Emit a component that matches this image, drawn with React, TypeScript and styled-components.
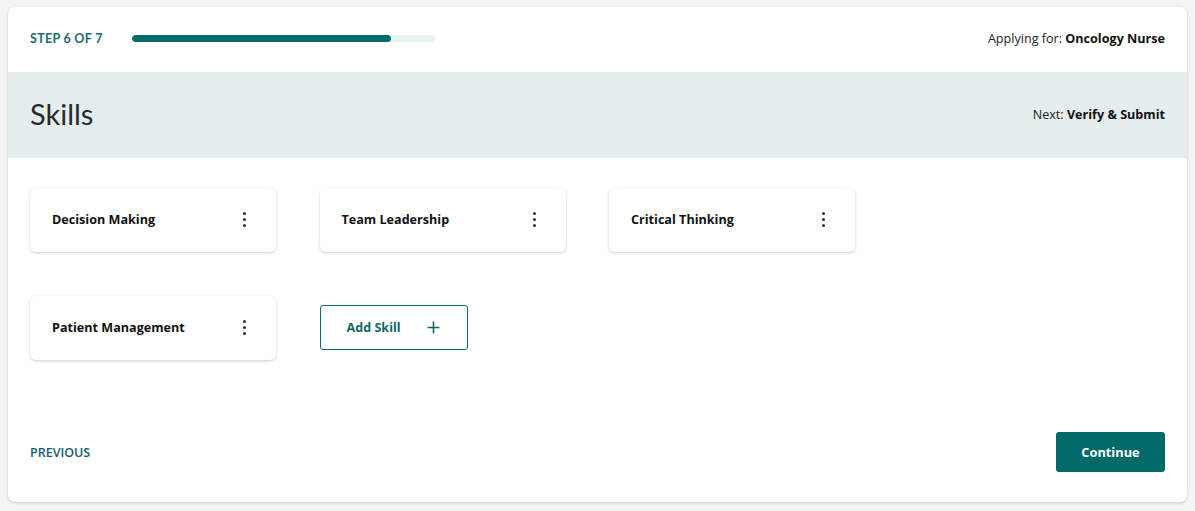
import React from "react";
import styled, { createGlobalStyle } from "styled-components";

const Global = createGlobalStyle`
  html, body { margin: 0; padding: 0; background: #f4f4f4; }
  body { font-family: "Open Sans", "Liberation Sans", sans-serif; }
  * { box-sizing: border-box; }
`;

const Page = styled.div`
  padding: 7px 8px 9px 8px;
`;

const Card = styled.div`
  height: 495px;
  background: #ffffff;
  border-radius: 7px;
  box-shadow: 0 1px 3px rgba(0, 0, 0, 0.18);
  display: flex;
  flex-direction: column;
  overflow: hidden;
`;

const Header = styled.div`
  height: 65px;
  padding: 0 22px 2px 22px;
  display: flex;
  align-items: center;
  justify-content: space-between;
`;

const StepGroup = styled.div`
  display: flex;
  align-items: center;
  gap: 29px;
`;

const StepLabel = styled.span`
  font-family: "Lato", "Liberation Sans", sans-serif;
  font-weight: 700;
  font-size: 12.5px;
  letter-spacing: 0.3px;
  color: #1d6a72;
`;

const Track = styled.div`
  width: 303px;
  height: 7px;
  border-radius: 4px;
  background: #e5f3f3;
  overflow: hidden;
`;

const Fill = styled.div`
  height: 100%;
  border-radius: 4px;
  background: #006d69;
`;

const Meta = styled.span`
  font-size: 12.6px;
  color: #222;
  b { font-weight: 700; color: #111; }
`;

const Band = styled.div`
  height: 86px;
  background: #e5eeef;
  padding: 0 22px 2px 22px;
  display: flex;
  align-items: center;
  justify-content: space-between;
`;

const Title = styled.h1`
  margin: 0;
  font-family: "Lato", "Liberation Sans", sans-serif;
  font-weight: 400;
  font-size: 29px;
  color: #2a2a2a;
  line-height: 1;
  padding-bottom: 2px;
`;

const Content = styled.div`
  flex: 1;
  padding: 30px 22px 0 22px;
  display: grid;
  grid-template-columns: repeat(3, 246px);
  grid-auto-rows: 64px;
  column-gap: 43.5px;
  row-gap: 44px;
  align-content: start;
`;

const SkillCard = styled.div`
  background: #fff;
  border-radius: 6px;
  box-shadow: 0 1px 3px rgba(0, 0, 0, 0.2);
  display: flex;
  align-items: center;
  justify-content: space-between;
  padding: 0 30px 2px 22px;
`;

const SkillName = styled.span`
  font-weight: 700;
  font-size: 12.6px;
  color: #111;
`;

const Kebab = styled.button`
  border: 0;
  background: none;
  padding: 0;
  display: flex;
  flex-direction: column;
  gap: 3px;
  align-items: center;
  cursor: pointer;
  span {
    width: 3px;
    height: 3px;
    border-radius: 50%;
    background: #333;
  }
`;

const AddCell = styled.div`
  display: flex;
  align-items: center;
  padding-bottom: 2px;
`;

const AddButton = styled.button`
  width: 148px;
  height: 45px;
  border: 1px solid #0b6b68;
  border-radius: 3px;
  background: #fff;
  display: flex;
  align-items: center;
  padding: 0 27px 0 26px;
  justify-content: space-between;
  font-family: "Open Sans", "Liberation Sans", sans-serif;
  font-weight: 700;
  font-size: 12.6px;
  color: #0f6863;
  cursor: pointer;
`;

const Footer = styled.div`
  padding: 0 22px 30px 22px;
  display: flex;
  align-items: center;
  justify-content: space-between;
`;

const PrevLink = styled.button`
  border: 0;
  background: none;
  padding: 0;
  font-family: "Open Sans", "Liberation Sans", sans-serif;
  font-weight: 600;
  font-size: 12.5px;
  color: #11606a;
  cursor: pointer;
`;

const ContinueButton = styled.button`
  width: 109px;
  height: 40px;
  border: 0;
  border-radius: 3px;
  background: #006b66;
  color: #fff;
  font-family: "Open Sans", "Liberation Sans", sans-serif;
  font-weight: 700;
  font-size: 12.8px;
  padding-bottom: 2px;
  cursor: pointer;
`;

const skills = ["Decision Making", "Team Leadership", "Critical Thinking", "Patient Management"];

export default function App() {
  const step = 6;
  const total = 7;
  return (
    <>
      <Global />
      <Page>
        <Card>
          <Header>
            <StepGroup>
              <StepLabel>STEP {step} OF {total}</StepLabel>
              <Track>
                <Fill style={{ width: `${(step / total) * 100}%` }} />
              </Track>
            </StepGroup>
            <Meta>
              Applying for: <b>Oncology Nurse</b>
            </Meta>
          </Header>
          <Band>
            <Title>Skills</Title>
            <Meta>
              Next: <b>Verify &amp; Submit</b>
            </Meta>
          </Band>
          <Content>
            {skills.map((s) => (
              <SkillCard key={s}>
                <SkillName>{s}</SkillName>
                <Kebab aria-label="More options">
                  <span />
                  <span />
                  <span />
                </Kebab>
              </SkillCard>
            ))}
            <AddCell>
              <AddButton>
                Add Skill
                <svg width="13" height="13" viewBox="0 0 13 13">
                  <path d="M6.5 0.5v12M0.5 6.5h12" stroke="#0f6863" strokeWidth="1.6" fill="none" />
                </svg>
              </AddButton>
            </AddCell>
          </Content>
          <Footer>
            <PrevLink>PREVIOUS</PrevLink>
            <ContinueButton>Continue</ContinueButton>
          </Footer>
        </Card>
      </Page>
    </>
  );
}
